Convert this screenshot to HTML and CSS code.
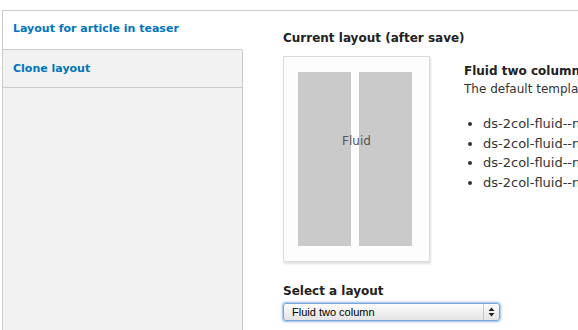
FILE: index.html
```html
<!DOCTYPE html>
<html>
<head>
<meta charset="utf-8">
<link rel="stylesheet" href="styles.css">
</head>
<body>
<div class="wrap">
  <ul class="tabs">
    <li class="tab active"><a>Layout for article in teaser</a></li>
    <li class="tab"><a>Clone layout</a></li>
    <li class="tab-fill"></li>
  </ul>
  <div class="panes">
    <h3 class="label">Current layout (after save)</h3>
    <div class="current">
      <div class="preview">
        <div class="col"></div>
        <div class="col"></div>
        <span class="preview-name">Fluid</span>
      </div>
      <div class="info">
        <div class="info-title">Fluid two column</div>
        <div class="info-desc">The default template for two column layouts.</div>
        <ul class="suggestions">
          <li>ds-2col-fluid--node</li>
          <li>ds-2col-fluid--node-article</li>
          <li>ds-2col-fluid--node-teaser</li>
          <li>ds-2col-fluid--node-article-teaser</li>
        </ul>
      </div>
    </div>
    <h3 class="label select-label">Select a layout</h3>
    <div class="select">
      <span class="select-text">Fluid two column</span>
      <span class="select-arrow">
        <svg width="7" height="10" viewBox="0 0 7 10"><path d="M3.5 0.5 L6.5 4 L0.5 4 Z M3.5 9.5 L6.5 6 L0.5 6 Z" fill="#222"/></svg>
      </span>
    </div>
  </div>
</div>
</body>
</html>
```

FILE: styles.css
```css
html, body {
  margin: 0;
  padding: 0;
  background: #fff;
}
body {
  font-family: "DejaVu Sans", "Open Sans", sans-serif;
  color: #333;
  width: 578px;
  height: 330px;
  overflow: hidden;
}
.wrap {
  margin: 10px 0 0 2px;
  border-top: 1px solid #ccc;
  border-left: 1px solid #ccc;
  display: flex;
  height: 330px;
}
.tabs {
  list-style: none;
  margin: 0;
  padding: 0;
  width: 240px;
  flex: none;
  display: flex;
  flex-direction: column;
}
.tab {
  height: 38px;
  box-sizing: border-box;
  padding: 7px 10px 0 10px;
  background: #f2f2f2;
  border-right: 1px solid #ccc;
  border-bottom: 1px solid #ccc;
}
.tab.active {
  height: 39px;
  padding-top: 6px;
  background: #fff;
  border-right-color: transparent;
}
.tab a {
  color: #0074bd;
  font-weight: bold;
  font-size: 11px;
  line-height: 16px;
}
.tab-fill {
  flex: 1;
  background: #f2f2f2;
  border-right: 1px solid #ccc;
}
.panes {
  padding: 19px 0 0 40px;
  flex: 1;
  min-width: 0;
}
.label {
  margin: 0;
  font-size: 12px;
  font-weight: bold;
  line-height: 16px;
  color: #222;
}
.current {
  display: flex;
  margin-top: 10px;
  white-space: nowrap;
}
.preview {
  position: relative;
  flex: none;
  width: 147px;
  height: 206px;
  box-sizing: border-box;
  border: 1px solid #dcdcdc;
  background: #fdfdfd;
  box-shadow: 1px 2px 2px rgba(0,0,0,0.12);
  padding: 15px 0 0 14px;
  display: flex;
  gap: 8px;
}
.col {
  width: 53px;
  height: 174px;
  background: #cacaca;
}
.preview-name {
  position: absolute;
  left: 0;
  right: 0;
  top: 77px;
  text-align: center;
  font-size: 12px;
  color: #555;
}
.info {
  margin-left: 34px;
  padding-top: 6px;
  font-size: 12px;
  line-height: 18px;
  overflow: hidden;
}
.info-title {
  font-weight: bold;
  color: #222;
}
.suggestions {
  margin: 16px 0 0 0;
  padding: 0 0 0 19px;
  line-height: 19.7px;
  font-size: 13px;
}
.select-label {
  margin-top: 21px;
}
.select {
  margin-top: 4px;
  width: 217px;
  height: 18px;
  box-sizing: border-box;
  border: 1px solid #7aa7d8;
  border-radius: 3px;
  box-shadow: 0 0 2px 1px #8fbbea;
  background: linear-gradient(#fdfdfd, #e4e4e4);
  display: flex;
  align-items: center;
  font-family: "Liberation Sans", Arial, sans-serif;
  font-size: 11px;
  color: #000;
}
.select-text {
  flex: 1;
  padding-left: 8px;
}
.select-arrow {
  width: 15px;
  height: 100%;
  border-left: 1px solid #c8c8c8;
  display: flex;
  align-items: center;
  justify-content: center;
}
```
